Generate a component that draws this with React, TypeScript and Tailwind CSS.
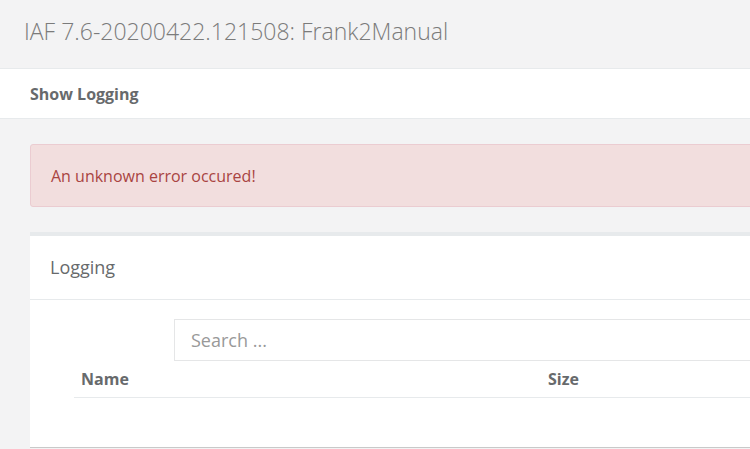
import React from "react";

export default function App() {
  return (
    <div className="w-[750px] h-[449px] overflow-hidden bg-[#f3f3f4]" style={{ fontFamily: '"Open Sans", "Noto Sans", sans-serif' }}>
      <div className="w-[1100px]">
        <div className="h-[68px] pl-[24px] pt-[15px]">
          <h2 className="text-[23px] leading-[32px] font-light text-[#7b7b7b]">IAF 7.6-20200422.121508: Frank2Manual</h2>
        </div>
        <div className="h-[51px] bg-white border-y border-[#e7eaec] flex items-center pl-[30px]">
          <span className="text-[16px] font-bold text-[#676a6c]">Show Logging</span>
        </div>
        <div className="pl-[30px] pt-[25px]">
          <div className="h-[63px] bg-[#f2dede] border border-[#ebccd1] rounded-[3px] flex items-center pl-[20px]">
            <span className="text-[16px] text-[#a94442]">An unknown error occured!</span>
          </div>
          <div className="mt-[25px] bg-white border-t-[4px] border-[#e7eaec]">
            <div className="h-[64px] border-b border-[#e7eaec] flex items-center pl-[20px]">
              <span className="text-[18px] text-[#676a6c]">Logging</span>
            </div>
            <div className="h-[148px] border-b border-[#c9c9c9] pt-[19px]">
              <div className="pl-[144px]">
                <div className="h-[42px] border border-[#e5e6e7] flex items-center pl-[16px]">
                  <span className="text-[18px] text-[#999]">Search ...</span>
                </div>
              </div>
              <div className="ml-[44px] h-[37px] border-b border-[#e7eaec] flex items-center">
                <span className="w-[474px] pl-[7px] text-[16px] font-bold text-[#676a6c]">Name</span>
                <span className="text-[16px] font-bold text-[#676a6c]">Size</span>
              </div>
            </div>
          </div>
        </div>
      </div>
    </div>
  );
}
